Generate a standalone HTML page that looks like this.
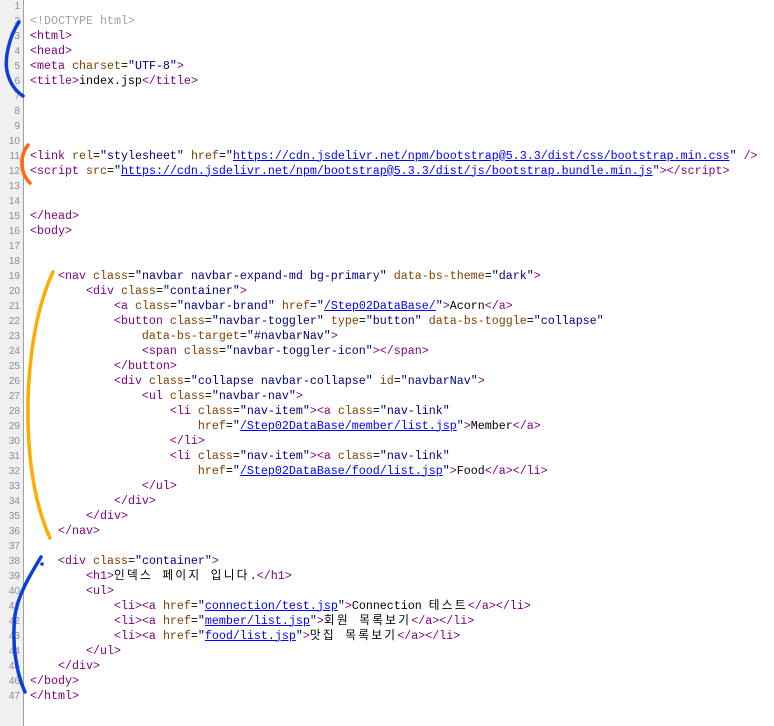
<!DOCTYPE html>
<html><head><meta charset="UTF-8"><style>
html,body{margin:0;padding:0;background:#fff;width:774px;height:726px;overflow:hidden}
#g{position:absolute;left:0;top:0;width:23px;height:726px;background:#f0f0f0;border-right:1px solid #a0a0a0}
.n{position:absolute;left:0;width:20px;text-align:right;font:10px "Liberation Sans",sans-serif;color:#8a8aa0;height:15px;line-height:15px}
pre{position:absolute;left:30px;top:-1.5px;margin:0;font:11.67px/15px "Liberation Mono","Noto Sans CJK KR",monospace;color:#000}
.t{color:#800080}.a{color:#804000}.v{color:#000080}.u{color:#0000ff;text-decoration:underline}.d{color:#a0a0a0}
.k{letter-spacing:2.3px}
svg{position:absolute;left:0;top:0}
</style></head><body>
<div id="g"></div>
<div id="nums"></div>
<script>
var h='';for(var i=1;i<=47;i++){h+='<div class="n" style="top:'+(i*15-16.5)+'px">'+i+'</div>';}document.getElementById('nums').innerHTML=h;
</script>
<pre>

<span class="d">&lt;!DOCTYPE html&gt;</span>
<span class="t">&lt;html&gt;</span>
<span class="t">&lt;head&gt;</span>
<span class="t">&lt;meta</span> <span class="a">charset</span>=<span class="v">"UTF-8"</span><span class="t">&gt;</span>
<span class="t">&lt;title&gt;</span>index.jsp<span class="t">&lt;/title&gt;</span>




<span class="t">&lt;link</span> <span class="a">rel</span>=<span class="v">"stylesheet"</span> <span class="a">href</span>=<span class="v">"</span><span class="u">https://cdn.jsdelivr.net/npm/bootstrap@5.3.3/dist/css/bootstrap.min.css</span><span class="v">"</span> <span class="t">/&gt;</span>
<span class="t">&lt;script</span> <span class="a">src</span>=<span class="v">"</span><span class="u">https://cdn.jsdelivr.net/npm/bootstrap@5.3.3/dist/js/bootstrap.bundle.min.js</span><span class="v">"</span><span class="t">&gt;&lt;/script&gt;</span>


<span class="t">&lt;/head&gt;</span>
<span class="t">&lt;body&gt;</span>


    <span class="t">&lt;nav</span> <span class="a">class</span>=<span class="v">"navbar navbar-expand-md bg-primary"</span> <span class="a">data-bs-theme</span>=<span class="v">"dark"</span><span class="t">&gt;</span>
        <span class="t">&lt;div</span> <span class="a">class</span>=<span class="v">"container"</span><span class="t">&gt;</span>
            <span class="t">&lt;a</span> <span class="a">class</span>=<span class="v">"navbar-brand"</span> <span class="a">href</span>=<span class="v">"</span><span class="u">/Step02DataBase/</span><span class="v">"</span><span class="t">&gt;</span>Acorn<span class="t">&lt;/a&gt;</span>
            <span class="t">&lt;button</span> <span class="a">class</span>=<span class="v">"navbar-toggler"</span> <span class="a">type</span>=<span class="v">"button"</span> <span class="a">data-bs-toggle</span>=<span class="v">"collapse"</span>
                <span class="a">data-bs-target</span>=<span class="v">"#navbarNav"</span><span class="t">&gt;</span>
                <span class="t">&lt;span</span> <span class="a">class</span>=<span class="v">"navbar-toggler-icon"</span><span class="t">&gt;&lt;/span&gt;</span>
            <span class="t">&lt;/button&gt;</span>
            <span class="t">&lt;div</span> <span class="a">class</span>=<span class="v">"collapse navbar-collapse"</span> <span class="a">id</span>=<span class="v">"navbarNav"</span><span class="t">&gt;</span>
                <span class="t">&lt;ul</span> <span class="a">class</span>=<span class="v">"navbar-nav"</span><span class="t">&gt;</span>
                    <span class="t">&lt;li</span> <span class="a">class</span>=<span class="v">"nav-item"</span><span class="t">&gt;&lt;a</span> <span class="a">class</span>=<span class="v">"nav-link"</span>
                        <span class="a">href</span>=<span class="v">"</span><span class="u">/Step02DataBase/member/list.jsp</span><span class="v">"</span><span class="t">&gt;</span>Member<span class="t">&lt;/a&gt;</span>
                    <span class="t">&lt;/li&gt;</span>
                    <span class="t">&lt;li</span> <span class="a">class</span>=<span class="v">"nav-item"</span><span class="t">&gt;&lt;a</span> <span class="a">class</span>=<span class="v">"nav-link"</span>
                        <span class="a">href</span>=<span class="v">"</span><span class="u">/Step02DataBase/food/list.jsp</span><span class="v">"</span><span class="t">&gt;</span>Food<span class="t">&lt;/a&gt;&lt;/li&gt;</span>
                <span class="t">&lt;/ul&gt;</span>
            <span class="t">&lt;/div&gt;</span>
        <span class="t">&lt;/div&gt;</span>
    <span class="t">&lt;/nav&gt;</span>

    <span class="t">&lt;div</span> <span class="a">class</span>=<span class="v">"container"</span><span class="t">&gt;</span>
        <span class="t">&lt;h1&gt;</span><span class="k">인덱스 페이지 입니다</span>.<span class="t">&lt;/h1&gt;</span>
        <span class="t">&lt;ul&gt;</span>
            <span class="t">&lt;li&gt;&lt;a</span> <span class="a">href</span>=<span class="v">"</span><span class="u">connection/test.jsp</span><span class="v">"</span><span class="t">&gt;</span>Connection <span class="k">테스트</span><span class="t">&lt;/a&gt;&lt;/li&gt;</span>
            <span class="t">&lt;li&gt;&lt;a</span> <span class="a">href</span>=<span class="v">"</span><span class="u">member/list.jsp</span><span class="v">"</span><span class="t">&gt;</span><span class="k">회원 목록보기</span><span class="t">&lt;/a&gt;&lt;/li&gt;</span>
            <span class="t">&lt;li&gt;&lt;a</span> <span class="a">href</span>=<span class="v">"</span><span class="u">food/list.jsp</span><span class="v">"</span><span class="t">&gt;</span><span class="k">맛집 목록보기</span><span class="t">&lt;/a&gt;&lt;/li&gt;</span>
        <span class="t">&lt;/ul&gt;</span>
    <span class="t">&lt;/div&gt;</span>
<span class="t">&lt;/body&gt;</span>
<span class="t">&lt;/html&gt;</span></pre>
<svg width="774" height="726" fill="none" stroke-linecap="round">
<path d="M19 22 C10 35 3 60 8 75 C11 85 17 92 23 96" stroke="#0a3fd8" stroke-width="3.5"/>
<path d="M28 145 C20 155 19 172 30 183" stroke="#ff6a10" stroke-width="3.5"/>
<path d="M53 272 C40 300 30 340 28 400 C27 460 35 505 50 538" stroke="#ffab00" stroke-width="3.5"/>
<path d="M41 557 C30 575 18 595 15 615 C12 640 15 670 25 692" stroke="#0a3fd8" stroke-width="3.5"/>
<circle cx="42" cy="564" r="1.8" fill="#0a3fd8" stroke="none"/>
</svg>
</body></html>
